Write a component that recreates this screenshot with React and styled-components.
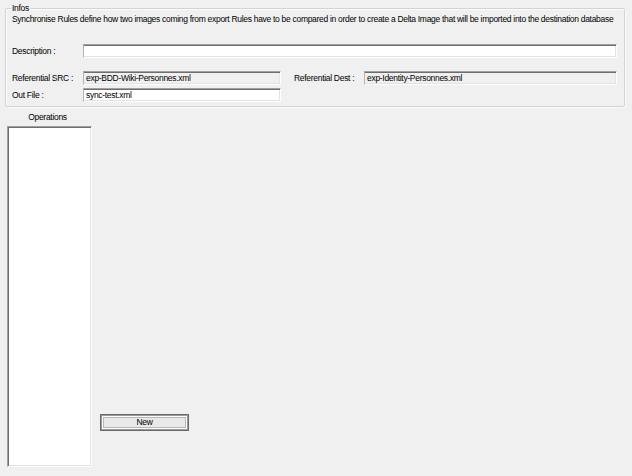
import React from "react";
import styled, { createGlobalStyle } from "styled-components";

const Global = createGlobalStyle`
  html, body { margin: 0; padding: 0; background: #f0f0f0; }
  body {
    font-family: "Liberation Sans", Arial, sans-serif;
    font-size: 8.5px;
    letter-spacing: -0.3px;
    color: #000;
  }
  #root { width: 632px; height: 476px; overflow: hidden; }
`;

const Window = styled.div`
  width: 632px;
  height: 476px;
  background: #f0f0f0;
  padding-top: 8px;
  box-sizing: border-box;
`;

const GroupBox = styled.section`
  position: relative;
  box-sizing: border-box;
  margin: 0 7px 0 5px;
  height: 99px;
  border: 1px solid #d3d3d3;
  border-radius: 2px;
  box-shadow: 1px 1px 0 #fbfbfb, inset 1px 1px 0 #fbfbfb;
  padding: 4px 0 0 6px;
`;

const Legend = styled.span`
  position: absolute;
  top: -6px;
  left: 5px;
  padding: 0 1px;
  background: #f0f0f0;
  line-height: 11px;
`;

const Intro = styled.p`
  margin: 0;
  line-height: 12px;
  white-space: nowrap;
`;

const Row = styled.div`
  display: flex;
  align-items: center;
  height: 14px;
  margin-top: ${(p) => p.$top}px;
`;

const Label = styled.span`
  flex: none;
  width: ${(p) => p.$width}px;
  padding-left: ${(p) => p.$indent || 0}px;
  box-sizing: border-box;
  white-space: nowrap;
  line-height: 12px;
`;

const TextBox = styled.div`
  flex: none;
  width: ${(p) => p.$width}px;
  box-sizing: border-box;
  height: 14px;
  background: ${(p) => (p.$readOnly ? "#f0f0f0" : "#ffffff")};
  border-top: 1px solid #a0a0a0;
  border-left: 1px solid #b4b4b4;
  border-right: 1px solid #fdfdfd;
  border-bottom: 1px solid #fdfdfd;
  box-shadow: inset 0 1px 0 #6e6e6e, inset -1px -1px 0 #e3e3e3;
  padding: 1px 0 0 2px;
  line-height: 11px;
  white-space: nowrap;
  overflow: hidden;
`;

const Lower = styled.div`
  display: flex;
  align-items: flex-start;
  margin-left: 7px;
`;

const OpsColumn = styled.div`
  display: flex;
  flex-direction: column;
  width: 85px;
`;

const OpsTitle = styled.div`
  margin-top: 4px;
  line-height: 12px;
  text-align: center;
  padding-right: 4px;
`;

const ListBox = styled.div`
  margin-top: 3px;
  box-sizing: border-box;
  height: 341px;
  background: #ffffff;
  border-top: 1px solid #a0a0a0;
  border-left: 1px solid #a0a0a0;
  border-right: 1px solid #fdfdfd;
  border-bottom: 1px solid #fdfdfd;
  box-shadow: inset 1px 1px 0 #6e6e6e, inset -1px -1px 0 #e3e3e3;
`;

const Button = styled.button`
  margin: 307px 0 0 8px;
  box-sizing: border-box;
  width: 89px;
  height: 17px;
  padding: 0;
  font: inherit;
  letter-spacing: inherit;
  color: #000;
  background: #e9e9e9;
  border: 1px solid #6a6a6a;
  box-shadow: inset 0 0 0 1px #9a9a9a, inset 0 0 0 2px #fdfdfd, inset 0 0 0 3px #b8b8b8;
  line-height: 13px;
  text-align: center;
`;

export default function App() {
  return (
    <Window>
      <Global />
      <GroupBox>
        <Legend>Infos</Legend>
        <Intro>
          Synchronise Rules define how two images coming from export Rules have to be compared in order to create a Delta Image that will be imported into the destination database
        </Intro>
        <Row $top={19}>
          <Label $width={71}>Description :</Label>
          <TextBox $width={534} />
        </Row>
        <Row $top={13}>
          <Label $width={71}>Referential SRC :</Label>
          <TextBox $readOnly $width={198}>exp-BDD-Wiki-Personnes.xml</TextBox>
          <Label $width={83} $indent={13}>Referential Dest :</Label>
          <TextBox $readOnly $width={253}>exp-Identity-Personnes.xml</TextBox>
        </Row>
        <Row $top={3}>
          <Label $width={71}>Out File :</Label>
          <TextBox $width={198}>sync-test.xml</TextBox>
        </Row>
      </GroupBox>
      <Lower>
        <OpsColumn>
          <OpsTitle>Operations</OpsTitle>
          <ListBox />
        </OpsColumn>
        <Button type="button">New</Button>
      </Lower>
    </Window>
  );
}
